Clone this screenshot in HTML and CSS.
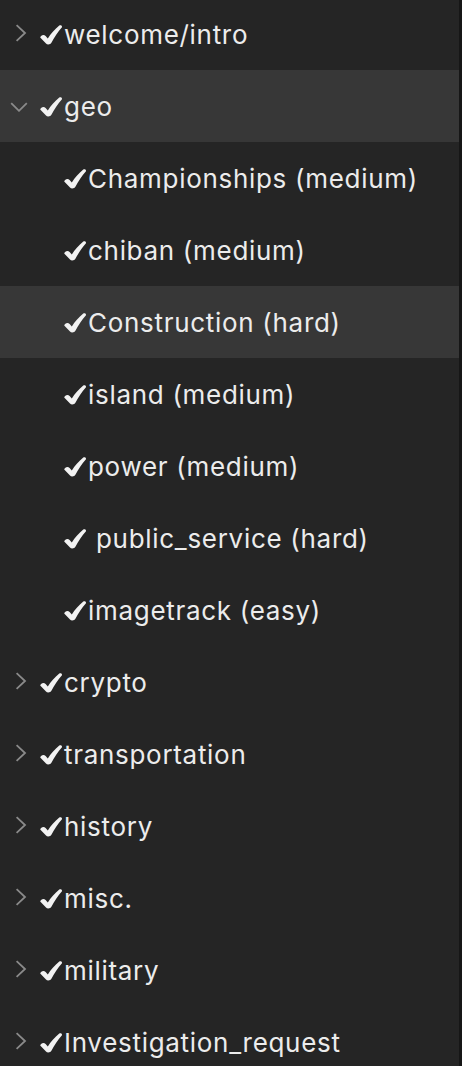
FILE: index.html
```html
<!DOCTYPE html>
<html>
<head>
<meta charset="utf-8">
<link rel="stylesheet" href="styles.css">
</head>
<body>
<div class="panel">
  <ul class="tree">
    <li class="row"><span class="twistie"><svg class="chev-right" viewBox="0 0 12 18" width="12" height="18"><path d="M1.6 1.2 L10 9 L1.6 16.8" fill="none" stroke="#8a8a8a" stroke-width="1.8"/></svg></span><svg class="check" viewBox="0 0 22 22" width="22" height="22"><path d="M0.2 14.5 C0.8 12.2 3.8 11.2 5.6 13 L7.8 15.6 C11 10.5 15 6 19 2.8 C20.6 1.6 22.6 2.6 21.8 4.6 C18 8.8 14.6 14 11.4 19.8 C10.4 21.8 7.2 22 6 20.6 Z" fill="#f2f2f2"/></svg><span class="label">welcome/intro</span></li>
    <li class="row selected"><span class="twistie"><svg class="chev-down" viewBox="0 0 18 10" width="18" height="10"><path d="M1.2 1.2 L9 8.8 L16.8 1.2" fill="none" stroke="#8a8a8a" stroke-width="1.8"/></svg></span><svg class="check" viewBox="0 0 22 22" width="22" height="22"><path d="M0.2 14.5 C0.8 12.2 3.8 11.2 5.6 13 L7.8 15.6 C11 10.5 15 6 19 2.8 C20.6 1.6 22.6 2.6 21.8 4.6 C18 8.8 14.6 14 11.4 19.8 C10.4 21.8 7.2 22 6 20.6 Z" fill="#f2f2f2"/></svg><span class="label">geo</span></li>
    <li class="row child"><svg class="check" viewBox="0 0 22 22" width="22" height="22"><path d="M0.2 14.5 C0.8 12.2 3.8 11.2 5.6 13 L7.8 15.6 C11 10.5 15 6 19 2.8 C20.6 1.6 22.6 2.6 21.8 4.6 C18 8.8 14.6 14 11.4 19.8 C10.4 21.8 7.2 22 6 20.6 Z" fill="#f2f2f2"/></svg><span class="label">Championships (medium)</span></li>
    <li class="row child"><svg class="check" viewBox="0 0 22 22" width="22" height="22"><path d="M0.2 14.5 C0.8 12.2 3.8 11.2 5.6 13 L7.8 15.6 C11 10.5 15 6 19 2.8 C20.6 1.6 22.6 2.6 21.8 4.6 C18 8.8 14.6 14 11.4 19.8 C10.4 21.8 7.2 22 6 20.6 Z" fill="#f2f2f2"/></svg><span class="label">chiban (medium)</span></li>
    <li class="row child hover"><svg class="check" viewBox="0 0 22 22" width="22" height="22"><path d="M0.2 14.5 C0.8 12.2 3.8 11.2 5.6 13 L7.8 15.6 C11 10.5 15 6 19 2.8 C20.6 1.6 22.6 2.6 21.8 4.6 C18 8.8 14.6 14 11.4 19.8 C10.4 21.8 7.2 22 6 20.6 Z" fill="#f2f2f2"/></svg><span class="label">Construction (hard)</span></li>
    <li class="row child"><svg class="check" viewBox="0 0 22 22" width="22" height="22"><path d="M0.2 14.5 C0.8 12.2 3.8 11.2 5.6 13 L7.8 15.6 C11 10.5 15 6 19 2.8 C20.6 1.6 22.6 2.6 21.8 4.6 C18 8.8 14.6 14 11.4 19.8 C10.4 21.8 7.2 22 6 20.6 Z" fill="#f2f2f2"/></svg><span class="label">island (medium)</span></li>
    <li class="row child"><svg class="check" viewBox="0 0 22 22" width="22" height="22"><path d="M0.2 14.5 C0.8 12.2 3.8 11.2 5.6 13 L7.8 15.6 C11 10.5 15 6 19 2.8 C20.6 1.6 22.6 2.6 21.8 4.6 C18 8.8 14.6 14 11.4 19.8 C10.4 21.8 7.2 22 6 20.6 Z" fill="#f2f2f2"/></svg><span class="label">power (medium)</span></li>
    <li class="row child"><svg class="check" viewBox="0 0 22 22" width="22" height="22"><path d="M0.2 14.5 C0.8 12.2 3.8 11.2 5.6 13 L7.8 15.6 C11 10.5 15 6 19 2.8 C20.6 1.6 22.6 2.6 21.8 4.6 C18 8.8 14.6 14 11.4 19.8 C10.4 21.8 7.2 22 6 20.6 Z" fill="#f2f2f2"/></svg><span class="label spaced">public_service (hard)</span></li>
    <li class="row child"><svg class="check" viewBox="0 0 22 22" width="22" height="22"><path d="M0.2 14.5 C0.8 12.2 3.8 11.2 5.6 13 L7.8 15.6 C11 10.5 15 6 19 2.8 C20.6 1.6 22.6 2.6 21.8 4.6 C18 8.8 14.6 14 11.4 19.8 C10.4 21.8 7.2 22 6 20.6 Z" fill="#f2f2f2"/></svg><span class="label">imagetrack (easy)</span></li>
    <li class="row"><span class="twistie"><svg class="chev-right" viewBox="0 0 12 18" width="12" height="18"><path d="M1.6 1.2 L10 9 L1.6 16.8" fill="none" stroke="#8a8a8a" stroke-width="1.8"/></svg></span><svg class="check" viewBox="0 0 22 22" width="22" height="22"><path d="M0.2 14.5 C0.8 12.2 3.8 11.2 5.6 13 L7.8 15.6 C11 10.5 15 6 19 2.8 C20.6 1.6 22.6 2.6 21.8 4.6 C18 8.8 14.6 14 11.4 19.8 C10.4 21.8 7.2 22 6 20.6 Z" fill="#f2f2f2"/></svg><span class="label">crypto</span></li>
    <li class="row"><span class="twistie"><svg class="chev-right" viewBox="0 0 12 18" width="12" height="18"><path d="M1.6 1.2 L10 9 L1.6 16.8" fill="none" stroke="#8a8a8a" stroke-width="1.8"/></svg></span><svg class="check" viewBox="0 0 22 22" width="22" height="22"><path d="M0.2 14.5 C0.8 12.2 3.8 11.2 5.6 13 L7.8 15.6 C11 10.5 15 6 19 2.8 C20.6 1.6 22.6 2.6 21.8 4.6 C18 8.8 14.6 14 11.4 19.8 C10.4 21.8 7.2 22 6 20.6 Z" fill="#f2f2f2"/></svg><span class="label">transportation</span></li>
    <li class="row"><span class="twistie"><svg class="chev-right" viewBox="0 0 12 18" width="12" height="18"><path d="M1.6 1.2 L10 9 L1.6 16.8" fill="none" stroke="#8a8a8a" stroke-width="1.8"/></svg></span><svg class="check" viewBox="0 0 22 22" width="22" height="22"><path d="M0.2 14.5 C0.8 12.2 3.8 11.2 5.6 13 L7.8 15.6 C11 10.5 15 6 19 2.8 C20.6 1.6 22.6 2.6 21.8 4.6 C18 8.8 14.6 14 11.4 19.8 C10.4 21.8 7.2 22 6 20.6 Z" fill="#f2f2f2"/></svg><span class="label">history</span></li>
    <li class="row"><span class="twistie"><svg class="chev-right" viewBox="0 0 12 18" width="12" height="18"><path d="M1.6 1.2 L10 9 L1.6 16.8" fill="none" stroke="#8a8a8a" stroke-width="1.8"/></svg></span><svg class="check" viewBox="0 0 22 22" width="22" height="22"><path d="M0.2 14.5 C0.8 12.2 3.8 11.2 5.6 13 L7.8 15.6 C11 10.5 15 6 19 2.8 C20.6 1.6 22.6 2.6 21.8 4.6 C18 8.8 14.6 14 11.4 19.8 C10.4 21.8 7.2 22 6 20.6 Z" fill="#f2f2f2"/></svg><span class="label">misc.</span></li>
    <li class="row"><span class="twistie"><svg class="chev-right" viewBox="0 0 12 18" width="12" height="18"><path d="M1.6 1.2 L10 9 L1.6 16.8" fill="none" stroke="#8a8a8a" stroke-width="1.8"/></svg></span><svg class="check" viewBox="0 0 22 22" width="22" height="22"><path d="M0.2 14.5 C0.8 12.2 3.8 11.2 5.6 13 L7.8 15.6 C11 10.5 15 6 19 2.8 C20.6 1.6 22.6 2.6 21.8 4.6 C18 8.8 14.6 14 11.4 19.8 C10.4 21.8 7.2 22 6 20.6 Z" fill="#f2f2f2"/></svg><span class="label">military</span></li>
    <li class="row"><span class="twistie"><svg class="chev-right" viewBox="0 0 12 18" width="12" height="18"><path d="M1.6 1.2 L10 9 L1.6 16.8" fill="none" stroke="#8a8a8a" stroke-width="1.8"/></svg></span><svg class="check" viewBox="0 0 22 22" width="22" height="22"><path d="M0.2 14.5 C0.8 12.2 3.8 11.2 5.6 13 L7.8 15.6 C11 10.5 15 6 19 2.8 C20.6 1.6 22.6 2.6 21.8 4.6 C18 8.8 14.6 14 11.4 19.8 C10.4 21.8 7.2 22 6 20.6 Z" fill="#f2f2f2"/></svg><span class="label">Investigation_request</span></li>
  </ul>
</div>
</body>
</html>
```
FILE: styles.css
```css
html, body {
  margin: 0;
  padding: 0;
  background: #252525;
  height: 100%;
  overflow: hidden;
}
.panel {
  height: 1066px;
  border-right: 3px solid #161616;
  background: #252525;
  overflow: hidden;
}
.tree {
  list-style: none;
  margin: -2px 0 0 0;
  padding: 0;
}
.row {
  height: 72px;
  display: flex;
  align-items: center;
  padding-left: 0;
  font-family: Inter, "Noto Sans", sans-serif;
  font-size: 26px;
  font-weight: 400;
  letter-spacing: 0.7px;
  color: #ececec;
  white-space: nowrap;
}
.row.selected, .row.hover {
  background: #373737;
}
.row.child {
  padding-left: 64px;
}
.twistie {
  width: 40px;
  flex: none;
  display: flex;
  align-items: center;
}
.twistie svg { display: block; }
.chev-right {
  margin-left: 15px;
  margin-top: -2px;
}
.chev-down {
  margin-left: 10px;
  margin-top: 2px;
}
.check {
  display: block;
  flex: none;
  margin-right: 2px;
}
.label {
  line-height: 1;
  padding-top: 2px;
}
.label.spaced {
  padding-left: 8px;
}
```
